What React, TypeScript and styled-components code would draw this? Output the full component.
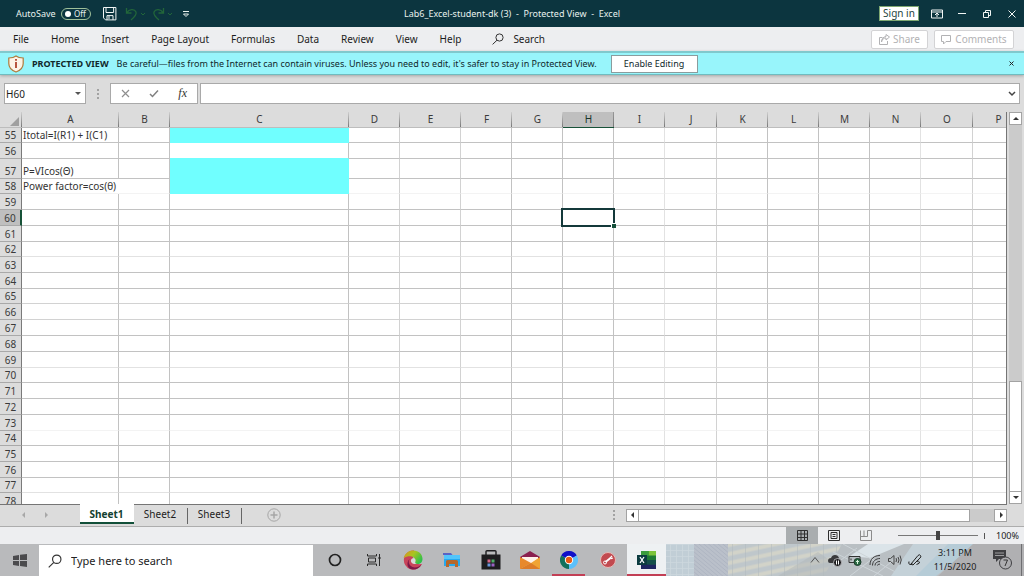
import React from "react";
import styled, { createGlobalStyle, css } from "styled-components";

const ui = `"Noto Sans", "Open Sans", sans-serif`;

const Global = createGlobalStyle`
  *, *::before, *::after { box-sizing: border-box; }
  body { margin: 0; font-family: ${ui}; font-size: 10px; color: #1c1c1c; }
  button, input { font: inherit; color: inherit; margin: 0; }
`;

const Window = styled.div`
  display: flex;
  flex-direction: column;
  height: 100vh;
  overflow: hidden;
  background: #dcdcdc;
`;

/* ---------- title bar ---------- */
const TitleBar = styled.header`
  display: grid;
  grid-template-columns: 1fr auto 1fr;
  align-items: center;
  height: 27px;
  flex: none;
  background: #0c353f;
  color: #e8f1ee;
  font-size: 9px;
`;
const QuickAccess = styled.div`
  display: flex;
  align-items: center;
  padding-left: 16px;
`;
const Title = styled.h1`
  margin: 0;
  font-size: 9px;
  font-weight: 400;
  white-space: pre;
`;
const PlainButton = styled.button`
  display: flex;
  align-items: center;
  justify-content: center;
  padding: 0;
  border: 0;
  background: none;
`;
const AutoSave = styled.button`
  display: flex;
  align-items: center;
  gap: 5px;
  padding: 0;
  margin-right: 12px;
  border: 0;
  background: none;
`;
const Toggle = styled.span`
  display: flex;
  align-items: center;
  justify-content: space-between;
  width: 30px;
  height: 12px;
  padding: 0 4px 0 3px;
  border: 1px solid #9fc09a;
  border-radius: 6px;
  font-size: 8px;
  line-height: 10px;
  &::before {
    content: "";
    width: 6px;
    height: 6px;
    border-radius: 50%;
    background: #fff;
  }
`;
const QuickButton = styled(PlainButton)<{ $w: number; $gap?: number }>`
  width: ${(p) => p.$w}px;
  margin-left: ${(p) => p.$gap ?? 0}px;
`;
const WindowControls = styled.div`
  display: flex;
  align-items: center;
  justify-content: flex-end;
`;
const SignIn = styled.button`
  height: 15px;
  width: 40px;
  margin-right: 5px;
  padding: 0;
  border: 1px solid #7fa872;
  background: #fff;
  color: #24443c;
  font-size: 10px;
  line-height: 13px;
`;
const ControlButton = styled(PlainButton)`
  width: 25px;
  height: 27px;
`;

/* ---------- ribbon tabs ---------- */
const Ribbon = styled.nav`
  display: flex;
  align-items: center;
  height: 24px;
  flex: none;
  padding: 0 10px 0 13px;
  background: #edeef0;
`;
const RibbonTabs = styled.div`
  display: flex;
  gap: 22px;
  flex: 1;
  align-items: center;
`;
const RibbonTab = styled.button`
  display: flex;
  align-items: center;
  gap: 9px;
  padding: 0;
  border: 0;
  background: none;
  white-space: nowrap;
`;
const SearchTab = styled(RibbonTab)`
  margin-left: 9px;
`;
const GhostButton = styled.button<{ $w: number }>`
  display: flex;
  align-items: center;
  justify-content: center;
  gap: 3px;
  width: ${(p) => p.$w}px;
  height: 19px;
  margin-left: 6px;
  padding: 0;
  border: 1px solid #d3d3d5;
  border-radius: 2px;
  background: #fff;
  color: #b2b2b4;
`;

/* ---------- protected view ---------- */
const Notice = styled.section`
  display: flex;
  align-items: center;
  height: 24px;
  flex: none;
  padding: 0 10px 0 8px;
  border-top: 2px solid #80c9cd;
  border-bottom: 1px solid #6fbcc0;
  background: #98f5fb;
  box-shadow: 0 1px 3px rgba(0, 0, 0, 0.25);
  font-size: 9px;
  color: #10282b;
  white-space: nowrap;
`;
const NoticeTitle = styled.strong`
  margin: 0 8px;
  font-weight: 700;
`;
const EnableButton = styled.button`
  width: 87px;
  height: 18px;
  margin-left: 14px;
  padding: 0;
  border: 1px solid #8a9c9d;
  background: #fff;
  line-height: 16px;
`;
const NoticeClose = styled(PlainButton)`
  margin-left: auto;
  width: 6px;
`;

/* ---------- formula bar ---------- */
const FormulaBar = styled.div`
  display: flex;
  align-items: center;
  height: 37px;
  flex: none;
  padding: 0 4px;
`;
const Box = styled.div<{ $w?: number }>`
  display: flex;
  align-items: center;
  height: 21px;
  border: 1px solid #a9a9a9;
  background: #fff;
  ${(p) => (p.$w ? css`width: ${p.$w}px; flex: none;` : css`flex: 1; min-width: 0;`)}
`;
const BoxInput = styled.input`
  flex: 1;
  min-width: 0;
  height: 19px;
  padding: 0 1px;
  border: 0;
  outline: 0;
  background: none;
`;
const Dots = styled.span`
  display: flex;
  flex-direction: column;
  align-items: center;
  gap: 2px;
  width: 24px;
  flex: none;
  i {
    width: 2px;
    height: 2px;
    background: #a2a2a2;
  }
`;
const BoxButton = styled(PlainButton)`
  flex: 1;
  height: 19px;
`;
const ArrowButton = styled(PlainButton)`
  width: 14px;
  height: 19px;
`;
const Fx = styled.span`
  font: italic 12px "Liberation Serif", serif;
  color: #333;
`;
const FormulaField = styled(Box)`
  margin-left: 2px;
`;

/* ---------- grid ---------- */
const GridArea = styled.main`
  display: flex;
  flex: 1;
  min-height: 0;
`;
const GridView = styled.div`
  flex: 1;
  min-width: 0;
  overflow: hidden;
  border-right: 1px solid #757575;
`;
const Sheet = styled.table`
  width: calc(100% + 18px);
  table-layout: fixed;
  border-collapse: separate;
  border-spacing: 0;
`;
const ColHead = styled.th<{ $active?: boolean }>`
  height: 16px;
  padding: 0;
  border-bottom: 1px solid #bdbdbd;
  background: linear-gradient(#cfcfcf, #777) right / 1px 100% no-repeat, #dcdcdc;
  font-weight: 400;
  line-height: 15px;
  color: #3a3a3a;
  ${(p) =>
    p.$active &&
    css`
      background: linear-gradient(#999, #777) right / 1px 100% no-repeat, #bfbfbf;
      border-bottom-color: #175238;
      color: #17352a;
    `}
`;
const Corner = styled(ColHead)`
  svg {
    display: block;
    margin: 3px 3px 0 auto;
  }
`;
const RowHead = styled.th<{ $active?: boolean }>`
  padding: 0;
  border-right: 1px solid #7a7a7a;
  border-bottom: 1px solid #a9a9a9;
  background: #dcdcdc;
  font-weight: 400;
  line-height: 14px;
  color: #3a3a3a;
  vertical-align: bottom;
  ${(p) =>
    p.$active &&
    css`
      background: #bfbfbf;
      border-right: 2px solid #175238;
    `}
`;
const Row = styled.tr<{ $h: number }>`
  height: ${(p) => p.$h}px;
`;
const Cell = styled.td<{ $right: string; $bottom: string; $fill?: boolean }>`
  position: relative;
  padding: 0 0 0 1px;
  border-right: 1px solid ${(p) => (p.$fill ? "#70ffff" : p.$right)};
  border-bottom: 1px solid ${(p) => (p.$fill ? "#70ffff" : p.$bottom)};
  background: ${(p) => (p.$fill ? "#70ffff" : "#fff")};
  line-height: 14px;
  white-space: nowrap;
  vertical-align: bottom;
  color: #333;
`;
const CellText = styled.span`
  position: relative;
  z-index: 1;
`;
const Selection = styled.div`
  position: absolute;
  inset: -2px;
  z-index: 2;
  border: 2px solid #14393a;
  &::after {
    content: "";
    position: absolute;
    right: -3px;
    bottom: -3px;
    width: 5px;
    height: 5px;
    background: #14503a;
    border-top: 1px solid #fff;
    border-left: 1px solid #fff;
  }
`;
const VScroll = styled.div`
  display: flex;
  flex-direction: column;
  width: 13px;
  flex: none;
  margin: 0 2px;
  background: #cbcbcb;
`;
const ScrollButton = styled(PlainButton)`
  width: 13px;
  height: 13px;
  flex: none;
  border: 1px solid #a3a3a3;
  background: #fff;
`;
const VThumb = styled.div`
  height: 110px;
  margin-top: auto;
  border: 1px solid #a3a3a3;
  border-bottom: 0;
  background: #fff;
`;

/* ---------- sheet tabs ---------- */
const TabBar = styled.div`
  display: flex;
  align-items: flex-start;
  height: 23px;
  flex: none;
  padding-right: 17px;
  border-bottom: 1px solid #adadad;
  background: linear-gradient(#757575, #757575) left top / calc(100% - 17px) 1px no-repeat;
`;
const TabNav = styled.div`
  display: flex;
  width: 80px;
  height: 22px;
  padding-left: 13px;
  flex: none;
`;
const NavButton = styled(PlainButton)`
  width: 22px;
`;
const SheetTab = styled.button<{ $active?: boolean }>`
  width: 54px;
  height: 20px;
  padding: 1px 2px 0 0;
  border: 0;
  background: none;
  line-height: 17px;
  flex: none;
  ${(p) =>
    p.$active
      ? css`
          padding: 2px 1px 0 0;
          background: #fff;
          border-bottom: 2px solid #12503a;
          color: #12402f;
          font-weight: 700;
        `
      : css`
          background: linear-gradient(#666, #666) right 4px / 1px 16px no-repeat;
        `}
`;
const AddSheet = styled(PlainButton)`
  margin: 4px 0 0 25px;
`;
const HScrollWrap = styled.div`
  display: flex;
  align-items: center;
  margin-left: auto;
  height: 22px;
  width: 405px;
`;
const HScroll = styled.div`
  display: flex;
  flex: 1;
  height: 13px;
  background: #cbcbcb;
`;
const HThumb = styled.div`
  flex: 1;
  margin-right: 24px;
  border: 1px solid #a3a3a3;
  border-left: 0;
  background: #fff;
`;

/* ---------- status bar ---------- */
const StatusBar = styled.footer`
  display: flex;
  align-items: center;
  justify-content: flex-end;
  height: 17px;
  flex: none;
  padding-right: 5px;
  background: #edeef0;
  font-size: 9px;
`;
const ViewButton = styled(PlainButton)<{ $active?: boolean }>`
  width: 32px;
  height: 17px;
  background: ${(p) => (p.$active ? "#a9adaf" : "none")};
`;
const Zoom = styled.input`
  appearance: none;
  width: 80px;
  height: 12px;
  margin: 0 6px 0 16px;
  background: linear-gradient(#777, #777) center / 100% 1px no-repeat;
  &::-webkit-slider-thumb {
    appearance: none;
    width: 4px;
    height: 9px;
    background: #444;
  }
`;
const ZoomIn = styled.span`
  width: 1px;
  height: 6px;
  margin-right: 11px;
  background: #555;
`;

/* ---------- taskbar ---------- */
const Taskbar = styled.div`
  position: relative;
  display: flex;
  height: 32px;
  flex: none;
  background: #b9babc;
`;
const Wallpaper = styled.svg`
  position: absolute;
  inset: 0 0 0 auto;
  width: 396px;
  height: 32px;
`;
const Start = styled(PlainButton)`
  width: 39px;
`;
const TaskSearch = styled.label`
  display: flex;
  align-items: center;
  gap: 9px;
  width: 274px;
  margin-top: 1px;
  padding-left: 9px;
  flex: none;
  background: #fff;
  input {
    flex: 1;
    min-width: 0;
    padding: 0;
    border: 0;
    outline: 0;
    font-size: 11px;
    background: none;
  }
  input::placeholder { color: #222; opacity: 1; }
`;
const Apps = styled.div`
  display: flex;
  padding-left: 2px;
`;
const AppButton = styled(PlainButton)<{ $running?: boolean; $active?: boolean }>`
  position: relative;
  width: 39px;
  background: ${(p) => (p.$active ? "#eef1f3" : "none")};
  ${(p) =>
    p.$running &&
    css`
      &::after {
        content: "";
        position: absolute;
        inset: auto ${p.$active ? 0 : 3}px 0;
        height: 2px;
        background: #c23f55;
      }
    `}
`;
const Tray = styled.div`
  position: relative;
  display: flex;
  align-items: center;
  margin-left: auto;
`;
const TrayButton = styled(PlainButton)`
  width: 20px;
  height: 32px;
`;
const Clock = styled.time`
  display: flex;
  flex-direction: column;
  align-items: center;
  width: 60px;
  font-size: 9px;
  line-height: 14px;
`;
const Notifications = styled(PlainButton)`
  width: 36px;
  height: 32px;
`;
const ShowDesktop = styled(PlainButton)`
  width: 3px;
  height: 32px;
  border-left: 1px solid #6f6f72;
`;

const line = "#c2c2c2";
const mid = "#d2d2d2";
const light = "#e2e2e2";
const faint = "#f3f3f3";

const columns: { id: string; w?: number; line: string }[] = [
  { id: "A", w: 97, line },
  { id: "B", w: 51, line },
  { id: "C", w: 179, line },
  { id: "D", w: 51, line: mid },
  { id: "E", w: 61, line: mid },
  { id: "F", w: 51, line },
  { id: "G", w: 51, line },
  { id: "H", w: 51, line },
  { id: "I", w: 51, line: light },
  { id: "J", w: 52, line: mid },
  { id: "K", w: 51, line },
  { id: "L", w: 51, line },
  { id: "M", w: 51, line },
  { id: "N", w: 51, line: light },
  { id: "O", w: 52, line: mid },
  { id: "P", line },
];

const rows: { n: number; h: number; line: string }[] = [
  { n: 55, h: 15, line },
  { n: 56, h: 16, line },
  { n: 57, h: 20, line },
  { n: 58, h: 15, line: faint },
  { n: 59, h: 16, line },
  { n: 60, h: 16, line },
  { n: 61, h: 16, line },
  { n: 62, h: 15, line: light },
  { n: 63, h: 16, line },
  { n: 64, h: 16, line },
  { n: 65, h: 15, line: mid },
  { n: 66, h: 16, line: mid },
  { n: 67, h: 16, line },
  { n: 68, h: 16, line },
  { n: 69, h: 16, line: light },
  { n: 70, h: 15, line },
  { n: 71, h: 16, line },
  { n: 72, h: 16, line },
  { n: 73, h: 16, line: faint },
  { n: 74, h: 15, line },
  { n: 75, h: 16, line },
  { n: 76, h: 16, line },
  { n: 77, h: 15, line: light },
  { n: 78, h: 16, line },
];

const texts: Record<string, string> = {
  A55: "Itotal=I(R1) + I(C1)",
  A57: "P=VIcos(Θ)",
  A58: "Power factor=cos(θ)",
};
const filled = new Set(["C55", "C57", "C58"]);

const Triangle = ({ dir, color = "#333" }: { dir: "up" | "down" | "left" | "right"; color?: string }) => {
  const d = { up: "M1 5h6L4 2z", down: "M1 2h6L4 5z", left: "M5 1v6L2 4z", right: "M3 1v6l3-3z" }[dir];
  return (
    <svg width="8" height="8" viewBox="0 0 8 8" aria-hidden="true">
      <path d={d} fill={color} />
    </svg>
  );
};

const Magnifier = ({ size }: { size: number }) => (
  <svg width={size} height={size} viewBox="0 0 12 12" fill="none" stroke="#333" strokeWidth="1" aria-hidden="true">
    <circle cx="7.5" cy="4.5" r="3.6" />
    <path d="M5 7.2L0.6 11.4" />
  </svg>
);

const stroke = { fill: "none", strokeWidth: 1 } as const;

function TopBar() {
  return (
    <TitleBar>
      <QuickAccess>
        <AutoSave>
          AutoSave <Toggle>Off</Toggle>
        </AutoSave>
        <QuickButton $w={14} aria-label="Save">
          <svg width="14" height="14" viewBox="0 0 14 14" {...stroke} stroke="#f2f6f5">
            <path d="M.5.5h12.4v12.4H2.5l-2-2zM3 .5v5h7.6v-5M4 12.9V8.6h6v4.3M6 9v3" />
          </svg>
        </QuickButton>
        <QuickButton $w={22} $gap={8} aria-label="Undo">
          <svg width="22" height="14" viewBox="0 0 22 14" {...stroke} stroke="#22663a">
            <path d="M1.5 1v5h5M1.8 5.8C4 2 9.5 1.5 11 5c1 3-2 5.5-5 8" strokeWidth="1.3" />
            <path d="M16 6l2 2 2-2" />
          </svg>
        </QuickButton>
        <QuickButton $w={22} $gap={5} aria-label="Redo">
          <svg width="22" height="14" viewBox="0 0 22 14" {...stroke} stroke="#22663a">
            <path d="M11.5 1v5h-5M11.2 5.8C9 2 3.5 1.5 2 5c-1 3 2 5.5 5 8" strokeWidth="1.3" />
            <path d="M16 6l2 2 2-2" />
          </svg>
        </QuickButton>
        <QuickButton $w={8} $gap={8} aria-label="Customize Quick Access Toolbar">
          <svg width="8" height="8" viewBox="0 0 8 8" {...stroke} stroke="#e8f1ee">
            <path d="M1 1.5h6M1.5 4L4 6.5 6.5 4z" />
          </svg>
        </QuickButton>
      </QuickAccess>
      <Title>{"Lab6_Excel-student-dk (3)  -  Protected View  -  Excel"}</Title>
      <WindowControls>
        <SignIn>Sign in</SignIn>
        <ControlButton aria-label="Ribbon display options">
          <svg width="12" height="10" viewBox="0 0 12 10" {...stroke} stroke="#f2f6f5">
            <path d="M.5 1h11v8H.5zM.5 3h11M6 8V4.5M4 6l2-2 2 2" />
          </svg>
        </ControlButton>
        <ControlButton aria-label="Minimize">
          <svg width="10" height="10" viewBox="0 0 10 10" {...stroke} stroke="#f2f6f5">
            <path d="M1 4.5h8" />
          </svg>
        </ControlButton>
        <ControlButton aria-label="Restore">
          <svg width="10" height="10" viewBox="0 0 10 10" {...stroke} stroke="#f2f6f5">
            <path d="M1.5 3.5h5v5h-5zM3.5 3V1.5h5v5H7" />
          </svg>
        </ControlButton>
        <ControlButton aria-label="Close">
          <svg width="10" height="10" viewBox="0 0 10 10" {...stroke} stroke="#f2f6f5">
            <path d="M1.5 1.5l7 7M8.5 1.5l-7 7" />
          </svg>
        </ControlButton>
      </WindowControls>
    </TitleBar>
  );
}

function RibbonBar() {
  return (
    <Ribbon>
      <RibbonTabs>
        {["File", "Home", "Insert", "Page Layout", "Formulas", "Data", "Review", "View", "Help"].map((t) => (
          <RibbonTab key={t}>{t}</RibbonTab>
        ))}
        <SearchTab>
          <Magnifier size={12} />
          Search
        </SearchTab>
      </RibbonTabs>
      <GhostButton $w={57}>
        <svg width="11" height="11" viewBox="0 0 11 11" {...stroke} stroke="#b2b2b4" aria-hidden="true">
          <path d="M3.5 3.5h-3v7h8V7M2.5 8C3 5 5 4 7 4v2l3.5-3L7 .5V2.5C4 3 2.5 5 2.5 8z" />
        </svg>
        Share
      </GhostButton>
      <GhostButton $w={80}>
        <svg width="11" height="11" viewBox="0 0 11 11" {...stroke} stroke="#b2b2b4" aria-hidden="true">
          <path d="M.5 1.5h9v6H5L2.5 10V7.5h-2z" />
        </svg>
        Comments
      </GhostButton>
    </Ribbon>
  );
}

function ProtectedNotice() {
  return (
    <Notice>
      <svg width="16" height="18" viewBox="0 0 16 18" aria-hidden="true">
        <path
          d="M8 1C6 2.6 3.5 3 .8 3v5.5c0 4 3 7 7.2 8.5 4.2-1.5 7.2-4.5 7.2-8.5V3C12.5 3 10 2.6 8 1z"
          fill="#fdf3e6"
          stroke="#b07a3c"
          strokeWidth="1.2"
        />
        <path d="M8 7v6M8 4v1.8" stroke="#b0442c" strokeWidth="1.8" />
      </svg>
      <NoticeTitle>PROTECTED VIEW</NoticeTitle>
      <span>
        Be careful—files from the Internet can contain viruses. Unless you need to edit, it's safer to stay in
        Protected View.
      </span>
      <EnableButton>Enable Editing</EnableButton>
      <NoticeClose aria-label="Close message">
        <svg width="5" height="5" viewBox="0 0 5 5" stroke="#222" strokeWidth="1">
          <path d="M.5.5l4 4M4.5.5l-4 4" />
        </svg>
      </NoticeClose>
    </Notice>
  );
}

function FormulaRow() {
  return (
    <FormulaBar>
      <Box $w={82}>
        <BoxInput aria-label="Name box" defaultValue="H60" />
        <ArrowButton aria-label="Names">
          <Triangle dir="down" color="#555" />
        </ArrowButton>
      </Box>
      <Dots>
        <i />
        <i />
        <i />
      </Dots>
      <Box $w={88}>
        <BoxButton aria-label="Cancel">
          <svg width="9" height="9" viewBox="0 0 9 9" stroke="#8e8e8e" strokeWidth="1.2">
            <path d="M1 1l7 7M8 1L1 8" />
          </svg>
        </BoxButton>
        <BoxButton aria-label="Enter">
          <svg width="10" height="9" viewBox="0 0 10 9" fill="none" stroke="#808080" strokeWidth="1.5">
            <path d="M1 5l2.5 2.5L9 1.5" />
          </svg>
        </BoxButton>
        <BoxButton aria-label="Insert function">
          <Fx>fx</Fx>
        </BoxButton>
      </Box>
      <FormulaField>
        <BoxInput aria-label="Formula" />
        <ArrowButton aria-label="Expand formula bar">
          <svg width="8" height="8" viewBox="0 0 8 8" fill="none" stroke="#444" strokeWidth="1.5">
            <path d="M1 2l3 3 3-3" />
          </svg>
        </ArrowButton>
      </FormulaField>
    </FormulaBar>
  );
}

function Grid() {
  return (
    <GridArea>
      <GridView>
        <Sheet>
          <colgroup>
            <col style={{ width: 22 }} />
            {columns.map((c) => (
              <col key={c.id} style={{ width: c.w }} />
            ))}
          </colgroup>
          <thead>
            <tr>
              <Corner aria-label="Select all">
                <svg width="9" height="9" viewBox="0 0 9 9">
                  <path d="M9 0v9H0z" fill="#a0a0a0" />
                </svg>
              </Corner>
              {columns.map((c) => (
                <ColHead key={c.id} scope="col" $active={c.id === "H"}>
                  {c.id}
                </ColHead>
              ))}
            </tr>
          </thead>
          <tbody>
            {rows.map((r) => (
              <Row key={r.n} $h={r.h}>
                <RowHead scope="row" $active={r.n === 60}>
                  {r.n}
                </RowHead>
                {columns.map((c) => {
                  const key = c.id + r.n;
                  return (
                    <Cell
                      key={key}
                      $right={key === "A58" ? "#fff" : c.line}
                      $bottom={key === "C56" ? "#70ffff" : r.line}
                      $fill={filled.has(key)}
                    >
                      {texts[key] && <CellText>{texts[key]}</CellText>}
                      {key === "H60" && <Selection />}
                    </Cell>
                  );
                })}
              </Row>
            ))}
          </tbody>
        </Sheet>
      </GridView>
      <VScroll>
        <ScrollButton aria-label="Scroll up">
          <Triangle dir="up" />
        </ScrollButton>
        <VThumb />
        <ScrollButton aria-label="Scroll down">
          <Triangle dir="down" />
        </ScrollButton>
      </VScroll>
    </GridArea>
  );
}

function SheetTabs() {
  return (
    <TabBar>
      <TabNav>
        <NavButton aria-label="Previous sheet">
          <Triangle dir="left" color="#a8a8a8" />
        </NavButton>
        <NavButton aria-label="Next sheet">
          <Triangle dir="right" color="#a8a8a8" />
        </NavButton>
      </TabNav>
      <SheetTab $active>Sheet1</SheetTab>
      <SheetTab>Sheet2</SheetTab>
      <SheetTab>Sheet3</SheetTab>
      <AddSheet aria-label="New sheet">
        <svg width="14" height="14" viewBox="0 0 14 14" fill="none" stroke="#a6a6a6">
          <circle cx="7" cy="7" r="6.2" />
          <path d="M7 3.5v7M3.5 7h7" strokeWidth="1.5" />
        </svg>
      </AddSheet>
      <HScrollWrap>
        <Dots>
          <i />
          <i />
          <i />
        </Dots>
        <HScroll>
          <ScrollButton aria-label="Scroll left">
            <Triangle dir="left" />
          </ScrollButton>
          <HThumb />
          <ScrollButton aria-label="Scroll right">
            <Triangle dir="right" />
          </ScrollButton>
        </HScroll>
      </HScrollWrap>
    </TabBar>
  );
}

function Status() {
  return (
    <StatusBar>
      <ViewButton $active aria-label="Normal view">
        <svg width="11" height="11" viewBox="0 0 11 11" fill="none" stroke="#2e2e2e">
          <path d="M.5.5h10v10H.5zM.5 4h10M.5 7.5h10M4 .5v10M7.5.5v10" />
        </svg>
      </ViewButton>
      <ViewButton aria-label="Page layout view">
        <svg width="12" height="11" viewBox="0 0 12 11" fill="none" stroke="#2e2e2e">
          <path d="M.5.5h11v10H.5zM3 2.5h6v6H3zM4.5 4.5h3M4.5 6.5h3" />
        </svg>
      </ViewButton>
      <ViewButton aria-label="Page break preview">
        <svg width="12" height="11" viewBox="0 0 12 11" fill="none" stroke="#8b8b8b">
          <path d="M.5.5v10h11V.5M.5 6.5h7v-6M4 .5v6M7.5.5h4" />
        </svg>
      </ViewButton>
      <Zoom type="range" aria-label="Zoom" defaultValue={50} />
      <ZoomIn />
      <span>100%</span>
    </StatusBar>
  );
}

const Scene = () => (
  <Wallpaper viewBox="0 0 396 32" preserveAspectRatio="none" aria-hidden="true">
    <defs>
      <pattern id="facade" width="13" height="9" patternUnits="userSpaceOnUse" patternTransform="skewY(-12)">
        <path d="M0 4.500h13" stroke="#d2d3c9" strokeWidth="4" />
        <path d="M0 0v9" stroke="#b1b9be" strokeWidth="1" />
      </pattern>
      <pattern id="slats" width="4" height="4" patternUnits="userSpaceOnUse" patternTransform="skewY(40)">
        <path d="M0 0h4" stroke="#a9b0be" strokeWidth="1.4" />
      </pattern>
      <pattern id="panes" width="6" height="6" patternUnits="userSpaceOnUse">
        <path d="M0 0h6M0 0v6" stroke="#cdd8de" strokeWidth="1.6" />
      </pattern>
    </defs>
    <rect width="396" height="32" fill="#bcc0c4" />
    <path d="M38 0h32v32H38z" fill="#c1ced6" />
    <path d="M38 0h32v32H38z" fill="url(#panes)" />
    <path d="M66 0h34v32H66z" fill="#bac0ca" />
    <path d="M66 0h34v32H66z" fill="url(#slats)" />
    <path d="M100 0h118l-18 32H100z" fill="#bfc7cb" />
    <path d="M100 0h118l-18 32H100z" fill="url(#facade)" />
    <path d="M150 32l40-24 34 24z" fill="#b2b7ba" opacity=".5" />
    <path d="M214 0h70l26 32H196z" fill="#b9bfc3" />
    <path d="M222 12L240 0h36l-34 14z" fill="#dbe4e9" />
    <path d="M205 8l50 24M215 0l60 32M205 22l24-18M222 32l26-20M246 32l22-18" stroke="#cdd4d8" strokeWidth="1" />
    <path d="M285 0h50l-32 32h-40z" fill="#c4d1d8" />
    <path d="M320 0h30l-42 32h-20z" fill="#b6ccd7" />
    <path d="M345 0h51v32h-86z" fill="#b0b0b2" />
  </Wallpaper>
);

function WindowsTaskbar() {
  return (
    <Taskbar>
      <Scene />
      <Start aria-label="Start">
        <svg width="14" height="13" viewBox="0 0 14 13" fill="#4b4b4d">
          <path d="M0 2l6-1v5H0zM7 .8L14 0v6H7zM0 7h6v5l-6-1zM7 7h7v6l-7-1z" />
        </svg>
      </Start>
      <TaskSearch>
        <Magnifier size={14} />
        <input type="text" placeholder="Type here to search" aria-label="Type here to search" />
      </TaskSearch>
      <Apps>
        <AppButton aria-label="Cortana">
          <svg width="14" height="14" viewBox="0 0 14 14" fill="none" stroke="#222" strokeWidth="1.7">
            <circle cx="7" cy="7" r="5.5" />
          </svg>
        </AppButton>
        <AppButton aria-label="Task view">
          <svg width="14" height="14" viewBox="0 0 14 14" fill="none" stroke="#2b2b2b">
            <path d="M.5 1v2h9V1M.5 13v-2h9v2M1.5 5h7v4h-7zM12.5 1v12M11 5h3" />
          </svg>
        </AppButton>
        <AppButton aria-label="Edge">
          <svg width="20" height="20" viewBox="0 0 20 20">
            <defs>
              <linearGradient id="edgeTop" x1="0" y1="0" x2="1" y2="0.6">
                <stop offset="0" stopColor="#e08a20" />
                <stop offset="0.5" stopColor="#a9c520" />
                <stop offset="1" stopColor="#2fc04a" />
              </linearGradient>
            </defs>
            <path d="M19 14a9.500 9.500 0 1 1-8-13.400L10 8c-2 3 1 7 9 6z" fill="#c8445a" />
            <path d="M.6 8C2 3 6 .5 10 .5c6 0 9.500 4 9.500 8.500 0 3-2 5-5 5-2 0-3-1-2.500-2 2-5-5-8-11.400-4z" fill="url(#edgeTop)" />
            <path d="M6.500 9c-1.500 3-.5 6.500 3 8 3 1 6.500 0 9-2.500-2 4-6 5.500-9 5C4 19 3 13 6.500 9z" fill="#7d1848" />
            <path d="M8.500 9c1.500-1.500 4.500-.5 4 2-.5 1.500-.5 2.500 1 3-4 .5-7-2-5-5z" fill="#d9d8d8" />
          </svg>
        </AppButton>
        <AppButton aria-label="File Explorer">
          <svg width="18" height="16" viewBox="0 0 18 16">
            <path d="M0 1h8l1.5 2H0z" fill="#5a63c4" />
            <path d="M1 3h16v11H1z" fill="#27a9ee" />
            <path d="M1 3h16v4H1z" fill="#52c5fb" />
            <path d="M3 15V9.500Q3 8 4.500 8h9Q15 8 15 9.500V15h-3v-3H6v3z" fill="#b5682c" />
          </svg>
        </AppButton>
        <AppButton aria-label="Microsoft Store">
          <svg width="20" height="20" viewBox="0 0 20 20">
            <path d="M5 5V1.500Q5 .7 6 .7h8q1 0 1 .8V5" fill="none" stroke="#1d1d1f" strokeWidth="1.4" />
            <path d="M.5 4.500h19v15H.5z" fill="#1d1d1f" />
            <path d="M6.500 9.500h3v3h-3z" fill="#d8688a" />
            <path d="M10.500 9.500h3v3h-3z" fill="#4fae68" />
            <path d="M6.500 13.500h3v3h-3z" fill="#6c9be0" />
            <path d="M10.500 13.500h3v3h-3z" fill="#9a62c4" />
          </svg>
        </AppButton>
        <AppButton aria-label="Mail">
          <svg width="20" height="18" viewBox="0 0 20 18">
            <path d="M0 6l10-6 10 6v4H0z" fill="#8b2150" />
            <path d="M2 6h16v6H2z" fill="#fff3ea" />
            <path d="M0 6l11 6-11 6z" fill="#e8892c" />
            <path d="M20 6v12H0l11-6z" fill="#f0a434" />
            <path d="M0 18l11-6 9 6z" fill="#dd7c28" />
          </svg>
        </AppButton>
        <AppButton $running aria-label="Chrome">
          <svg width="18" height="18" viewBox="0 0 18 18">
            <path d="M9 9L1.200 4.500A9 9 0 0 1 16.800 4.500z" fill="#1010c8" />
            <path d="M9 9L16.800 4.500A9 9 0 0 1 9 18z" fill="#5cc0fa" />
            <path d="M9 9v9A9 9 0 0 1 1.200 4.500z" fill="#12705c" />
            <circle cx="9" cy="9" r="4.2" fill="#fff" />
            <circle cx="9" cy="9" r="3.2" fill="#e85a14" />
          </svg>
        </AppButton>
        <AppButton aria-label="Tools">
          <svg width="16" height="16" viewBox="0 0 16 16">
            <circle cx="8" cy="8" r="7.5" fill="#c24a50" stroke="#e6b9b6" />
            <path d="M5.500 10l5-4" stroke="#fff" strokeWidth="1.8" />
            <circle cx="5" cy="10.5" r="1.5" fill="none" stroke="#fff" />
            <path d="M12 3.800L10.500 5.500l.8 1 1.700-.5" fill="none" stroke="#fff" strokeWidth="1.2" />
          </svg>
        </AppButton>
        <AppButton $running $active aria-label="Excel">
          <svg width="19" height="18" viewBox="0 0 19 18">
            <path d="M4 0h15v18H4z" fill="#1d7a34" />
            <path d="M11.500 0H19v4.500h-7.500z" fill="#7cc43a" />
            <path d="M4 0h7.500v4.500H4z" fill="#3a9c3c" />
            <path d="M4 9h7.500v9H4zM11.500 9H19v4.500h-7.500z" fill="#14504a" />
            <path d="M4 13.500h15V18H4z" fill="#1d2560" />
            <path d="M0 4h10v10H0z" fill="#0c3c40" />
            <path d="M3 6l4 6M7 6l-4 6" stroke="#fff" strokeWidth="1.3" />
          </svg>
        </AppButton>
      </Apps>
      <Tray>
        <TrayButton aria-label="Show hidden icons">
          <svg width="10" height="8" viewBox="0 0 10 8" fill="none" stroke="#555">
            <path d="M1 6.500l4-5 4 5" />
          </svg>
        </TrayButton>
        <TrayButton aria-label="OneDrive">
          <svg width="14" height="14" viewBox="0 0 14 14">
            <path d="M0 8q0-3 3-3 1-3 4-3 3 0 4 3l-5 5H2Q0 10 0 8z" fill="#3a3a3c" />
            <circle cx="9.5" cy="9.5" r="4" fill="#1d1d1f" stroke="#c9c9cb" strokeWidth=".8" />
            <path d="M8.500 7.500v4M10.500 7.500v4" stroke="#fff" />
          </svg>
        </TrayButton>
        <TrayButton aria-label="Battery">
          <svg width="14" height="14" viewBox="0 0 14 14" fill="none" stroke="#333">
            <path d="M1 3.500h11v5M1 3.500v6h5M3 5.500v2" />
            <circle cx="9.5" cy="9" r="3.5" fill="#2b6a44" stroke="#1b3a2a" />
            <path d="M9.500 7v4M8 8.500h3" stroke="#d7f0dc" />
          </svg>
        </TrayButton>
        <TrayButton aria-label="Wi-Fi">
          <svg width="12" height="12" viewBox="0 0 12 12" fill="none" stroke="#3c3c3e">
            <path d="M1 11C1 5 5 1.500 11 1.500M3.500 11.500C3.500 7 7 4.500 11 4.500M6 11.500C6 9 8 7.500 11 7.500M8.500 11.500q0-1.500 2.500-1.500" />
          </svg>
        </TrayButton>
        <TrayButton aria-label="Volume">
          <svg width="14" height="12" viewBox="0 0 14 12" fill="none" stroke="#444">
            <path d="M.5 4.500h2L6 1.500v9l-3.500-3h-2zM8 4q1 2 0 4M10 3q2 3 0 6M12 1.500q2.500 4.500 0 9" />
          </svg>
        </TrayButton>
        <TrayButton aria-label="Windows Ink">
          <svg width="14" height="14" viewBox="0 0 14 14" fill="none" stroke="#222">
            <path d="M3 11L10 2.500q1.500-1.500 2.500 0t-.5 2.500L5 12zM1 8.500q-1 2.500 1 3t2-1.500M8 8.500q3-1 3.500.5t-3 2.500" />
          </svg>
        </TrayButton>
        <Clock>
          <span>3:11 PM</span>
          <span>11/5/2020</span>
        </Clock>
        <Notifications aria-label="Notifications">
          <svg width="20" height="20" viewBox="0 0 20 20">
            <path d="M0 0h13v9H6l-3 3V9H0z" fill="#3f3f42" />
            <path d="M2 3h9M2 5.500h9" stroke="#b5b5b7" strokeWidth=".8" />
            <circle cx="12.5" cy="13" r="6" fill="#adadb0" stroke="#3f3f42" />
            <path d="M10.500 10h4l-2.500 6" fill="none" stroke="#333" />
          </svg>
        </Notifications>
        <ShowDesktop aria-label="Show desktop" />
      </Tray>
    </Taskbar>
  );
}

export default function App() {
  return (
    <Window>
      <Global />
      <TopBar />
      <RibbonBar />
      <ProtectedNotice />
      <FormulaRow />
      <Grid />
      <SheetTabs />
      <Status />
      <WindowsTaskbar />
    </Window>
  );
}
